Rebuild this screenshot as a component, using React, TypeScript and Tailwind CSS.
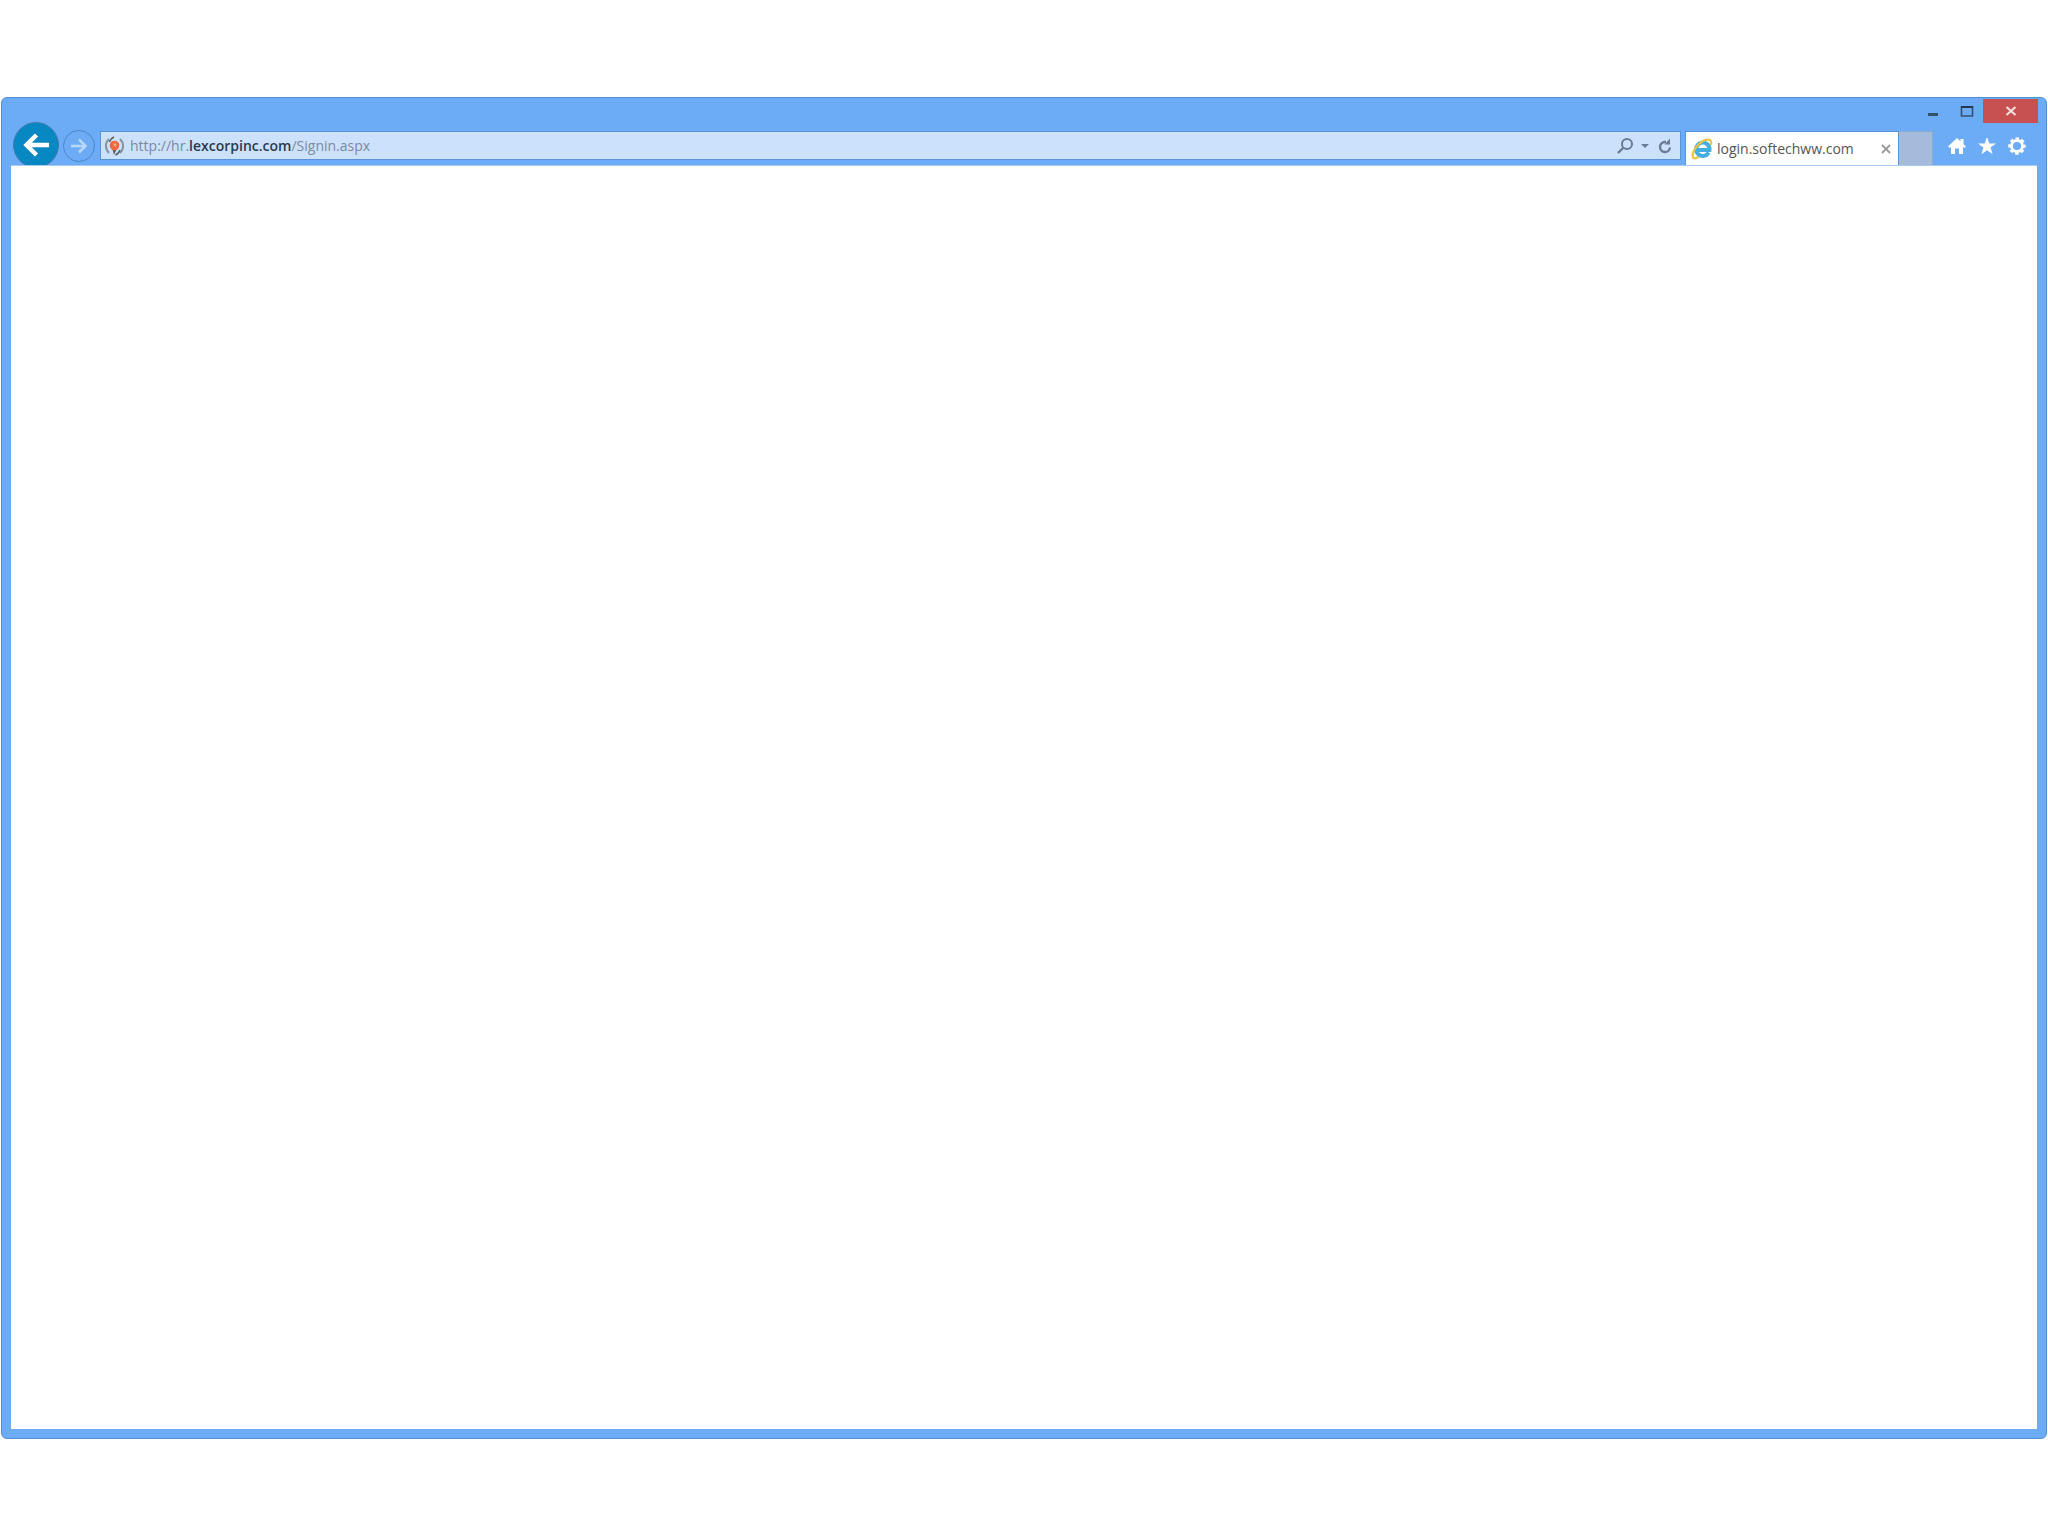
import type { ReactNode } from 'react';

type IconButtonProps = { label: string; className?: string; children?: ReactNode };

function IconButton({ label, className = '', children }: IconButtonProps) {
  return (
    <button type="button" aria-label={label} className={`flex shrink-0 items-center justify-center ${className}`}>
      {children}
    </button>
  );
}

function SiteIcon() {
  return (
    <svg viewBox="0 0 22 22" className="size-[22px] shrink-0" aria-hidden>
      <g fill="none" stroke="#8a929c" strokeWidth="2">
        <path d="M5 4A9.500 9.500 0 0 0 5 18" />
        <path d="M16 4A9.500 9.500 0 0 1 16 18" />
        <path d="M10 2Q6.500 3.500 5.500 7M11.500 20Q15 18.500 16 15" stroke="#59626d" strokeWidth="1.500" />
      </g>
      <path d="M8.500 14h4l-2.500 6z" fill="#4f5863" />
      <circle cx="10.500" cy="10.500" r="4.800" fill="#f4683a" />
      <path d="M9.500 8.500h3v3h-3z" fill="#fba588" />
    </svg>
  );
}

function ExplorerIcon() {
  return (
    <svg viewBox="0 0 22 22" className="size-[22px] shrink-0" aria-hidden>
      <path d="M17.700 14.500A6.700 6.700 0 1 1 18.500 12H7" fill="none" stroke="#42aee2" strokeWidth="4" />
      <path
        d="M19.500 7C21.500 2.500 18.500 0 12.500 2.800 6 6 .5 14.500 1.800 19c.5 2 3.200 1.600 5.700 0"
        fill="none"
        stroke="#ecc440"
        strokeWidth="2.2"
      />
    </svg>
  );
}

function TitleBar() {
  return (
    <div className="flex h-[25px] items-stretch justify-end pt-px pr-2">
      <IconButton label="Minimize" className="w-9">
        <svg viewBox="0 0 12 12" className="size-3" aria-hidden>
          <path d="M1 8h10v3H1z" fill="#34506f" />
        </svg>
      </IconButton>
      <IconButton label="Maximize" className="w-8">
        <svg viewBox="0 0 14 12" className="h-3 w-[14px]" aria-hidden>
          <path d="M1.500 2h11v9h-11z" fill="none" stroke="#34506f" strokeWidth="1.600" />
          <path d="M1 2h12" stroke="#26384f" strokeWidth="2" />
        </svg>
      </IconButton>
      <IconButton label="Close" className="w-[55px] bg-[#c75050]">
        <svg viewBox="0 0 12 12" className="size-3" aria-hidden>
          <path d="M1.500 2l9 8M10.500 2l-9 8" stroke="#f6dede" strokeWidth="2.2" />
        </svg>
      </IconButton>
    </div>
  );
}

function AddressBar() {
  return (
    <div className="relative mt-[9px] flex h-[29px] min-w-0 flex-1 items-center border border-[#5a94d8] bg-[#cce1fb] pr-[3px] pl-[3px] text-sm">
      <SiteIcon />
      <input
        type="text"
        aria-label="Address"
        defaultValue="http://hr.lexcorpinc.com/Signin.aspx"
        className="peer h-full min-w-0 flex-1 bg-transparent pl-1 text-transparent outline-none focus:text-gray-900"
      />
      {/* Host stands out from the rest of the URL until the field is edited */}
      <div aria-hidden className="pointer-events-none absolute left-[29px] text-[#7b8aa0] peer-focus:hidden">
        http://hr.<span className="font-semibold text-[#2b3a50]">lexcorpinc.com</span>/Signin.aspx
      </div>
      <IconButton label="Search" className="h-full w-6">
        <svg viewBox="0 0 18 18" className="size-[18px]" aria-hidden>
          <circle cx="11" cy="7" r="5" fill="none" stroke="#6a7c93" strokeWidth="2" />
          <path d="M7.500 10.500 2 16" stroke="#6a7c93" strokeWidth="2.400" />
        </svg>
      </IconButton>
      <IconButton label="Show address list" className="h-full w-4">
        <svg viewBox="0 0 8 6" className="h-[6px] w-2" aria-hidden>
          <path d="M0 1h8L4 5z" fill="#6a7c93" />
        </svg>
      </IconButton>
      <IconButton label="Refresh" className="h-full w-6">
        <svg viewBox="0 0 16 18" className="h-[18px] w-4" aria-hidden>
          <path d="M9 5H8a5 5 0 1 0 5 5.500" fill="none" stroke="#6a7c93" strokeWidth="2.400" />
          <path d="M7.500 7.500H13V1.500z" fill="#6a7c93" />
        </svg>
      </IconButton>
    </div>
  );
}

function Tabs() {
  return (
    <div className="mt-[9px] ml-1 flex h-[34px] shrink-0">
      <div className="flex w-[214px] items-center border border-b-0 border-[#5a94d8] bg-white pl-[5px]">
        <button type="button" className="flex flex-1 items-center gap-1 text-sm font-medium text-[#555]">
          <ExplorerIcon />
          login.softechww.com
        </button>
        <IconButton label="Close tab" className="h-full w-6">
          <svg viewBox="0 0 10 10" className="size-[10px]" aria-hidden>
            <path d="M1 1l8 8M9 1 1 9" stroke="#999" strokeWidth="1.800" />
          </svg>
        </IconButton>
      </div>
      <IconButton label="New tab" className="w-[34px] border border-b-0 border-l-0 border-[#8ca9d0] bg-[#a5bbdc]" />
    </div>
  );
}

function Tools() {
  return (
    <div className="mt-[9px] mr-[5px] ml-[9px] flex h-[29px] shrink-0 items-center text-white">
      <IconButton label="Home" className="w-[30px]">
        <svg viewBox="0 0 18 18" className="size-[18px]" fill="currentColor" aria-hidden>
          <path d="M9 1 0 9.500 1.500 11 3 9.800V17h4v-5.500h4V17h4V9.800l1.500 1.200L18 9.500l-2.500-2.300V2h-3v2.300z" />
        </svg>
      </IconButton>
      <IconButton label="Favorites" className="w-[30px]">
        <svg viewBox="0 0 18 18" className="size-[18px]" fill="currentColor" aria-hidden>
          <path d="m9 0 2.300 6.500H18l-5.400 4.100 2 6.700L9 13.200l-5.600 4.100 2-6.700L0 6.500h6.700z" />
        </svg>
      </IconButton>
      <IconButton label="Tools" className="w-[30px]">
        <svg viewBox="0 0 18 18" className="size-[18px]" fill="none" stroke="currentColor" aria-hidden>
          <circle cx="9" cy="9" r="5.500" strokeWidth="2.800" />
          <circle cx="9" cy="9" r="7.200" strokeWidth="3" strokeDasharray="3.300 2.355" strokeDashoffset="1.650" />
        </svg>
      </IconButton>
    </div>
  );
}

export default function App() {
  return (
    <div className="flex min-h-screen flex-col bg-white px-px pt-[97px] pb-[97px] font-['Open_Sans',sans-serif]">
      <div className="flex flex-1 flex-col rounded-md border border-[#568fd0] bg-[#6cacf6]">
        <TitleBar />
        <div className="-mt-px flex h-[43px] items-start overflow-hidden pr-[9px] pl-[11px]">
          <IconButton label="Back" className="size-[46px] rounded-full border border-[#4579ae] bg-[#0788c3]">
            <svg viewBox="0 0 26 24" className="h-6 w-[26px]" fill="none" stroke="#fff" strokeWidth="4.500" aria-hidden>
              <path d="M26 12H4M13.500 2 3.500 12l10 10" />
            </svg>
          </IconButton>
          <IconButton label="Forward" className="mt-2 mr-[5px] ml-1 size-8 rounded-full border border-[#4c86cf]">
            <svg viewBox="0 0 18 16" className="h-4 w-[18px]" fill="none" stroke="#b9d6fb" strokeWidth="2.500" aria-hidden>
              <path d="M1 8h14M9 1.500 15.500 8 9 14.500" />
            </svg>
          </IconButton>
          <AddressBar />
          <Tabs />
          <Tools />
        </div>
        <main className="mx-[9px] mb-[9px] flex-1 border-t border-[#a9cbf3] bg-white" />
      </div>
    </div>
  );
}
